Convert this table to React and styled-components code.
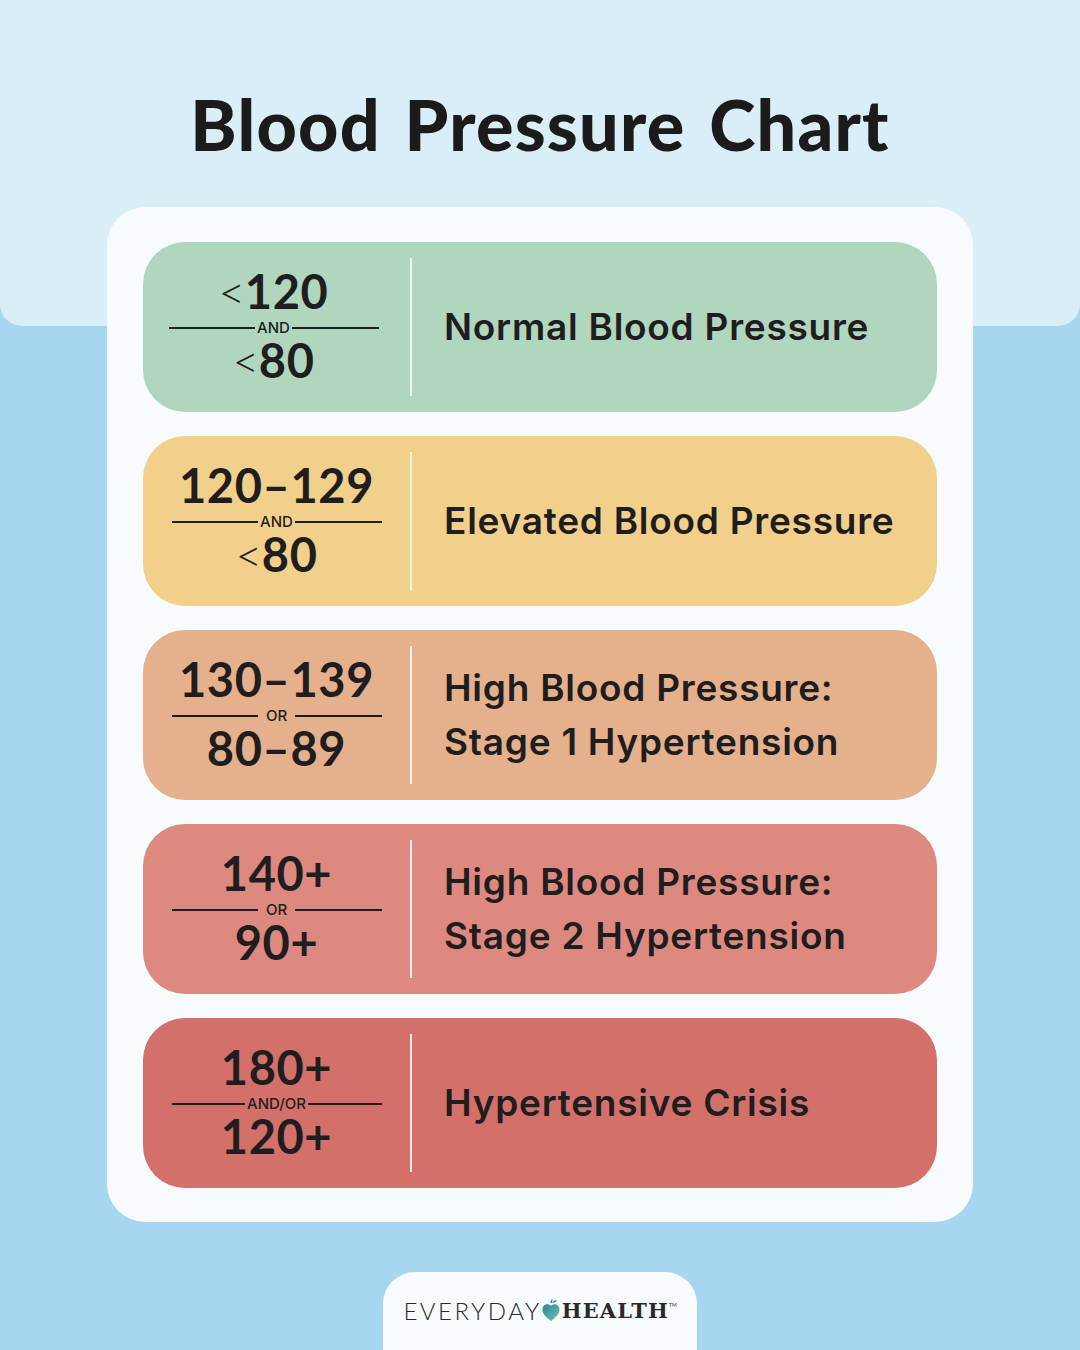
import React from "react";
import styled, { createGlobalStyle } from "styled-components";

const Global = createGlobalStyle`
  html, body { margin: 0; padding: 0; }
  body { background: #a7d7f0; font-family: "Lato", "Inter", sans-serif; }
`;

const Page = styled.div`
  position: relative;
  width: 1080px;
  height: 1350px;
  overflow: hidden;
  background: #a7d7f0;
  display: flex;
  flex-direction: column;
  align-items: center;
  &::before {
    content: "";
    position: absolute;
    left: 0;
    top: 0;
    width: 1080px;
    height: 326px;
    background: #daeef8;
    border-radius: 0 0 22px 22px;
  }
`;

const Title = styled.h1`
  position: relative;
  margin: 80px 0 0;
  height: 92px;
  font-family: "Lato", sans-serif;
  font-weight: 900;
  font-size: 70px;
  line-height: 88px;
  letter-spacing: 1.2px;
  word-spacing: 6px;
  color: #1b1b1b;
`;

const Card = styled.div`
  position: relative;
  margin-top: 35px;
  width: 866px;
  box-sizing: border-box;
  padding: 35px 36px 34px;
  background: #f7fbfd;
  border-radius: 38px;
  display: flex;
  flex-direction: column;
  gap: 24px;
`;

const Row = styled.div`
  height: 170px;
  border-radius: 42px;
  background: ${(p) => p.$bg};
  display: grid;
  grid-template-columns: 267px 2px 1fr;
`;

const Values = styled.div`
  display: flex;
  flex-direction: column;
  align-items: center;
  justify-content: center;
  padding-bottom: 4px;
`;

const Num = styled.div`
  font-family: "Lato", sans-serif;
  font-weight: 700;
  font-size: 47px;
  line-height: 52px;
  height: 52px;
  color: #1f1d1d;
  letter-spacing: 0.6px;
  display: flex;
  align-items: center;
  transform: translateX(${(p) => p.$shift || 0}px);
`;

const Lt = styled.span`
  font-weight: 300;
  font-size: 46px;
  margin-right: -1px;
  position: relative;
  top: 1px;
`;

const Sep = styled.div`
  width: 210px;
  height: 17px;
  box-sizing: border-box;
  padding-top: 5px;
  display: flex;
  align-items: center;
  gap: ${(p) => p.$gap}px;
  transform: translateX(${(p) => p.$shift || 0}px);
  &::before, &::after {
    content: "";
    flex: 1;
    height: 2px;
    background: #1f1d1d;
  }
`;

const SepLabel = styled.span`
  font-family: "Inter", sans-serif;
  font-weight: 500;
  font-size: 15px;
  line-height: 12px;
  color: #1f1d1d;
`;

const Divider = styled.div`
  background: #fbf7f2;
  margin: 16px 0;
  opacity: 0.9;
`;

const Label = styled.div`
  display: flex;
  flex-direction: column;
  justify-content: center;
  padding-left: 32px;
  font-family: "Inter", sans-serif;
  font-weight: 600;
  font-size: 37px;
  line-height: 54px;
  letter-spacing: 0.75px;
  color: #1f1d1d;
`;

const Tab = styled.div`
  position: relative;
  margin-top: 50px;
  width: 314px;
  height: 78px;
  flex-shrink: 0;
  background: #f7fbfd;
  border-radius: 32px 32px 0 0;
  display: flex;
  align-items: flex-start;
  justify-content: center;
  padding-top: 26px;
  box-sizing: border-box;
`;

const Logo = styled.div`
  display: flex;
  align-items: center;
  color: #2a2a2a;
`;

const Every = styled.span`
  font-family: "Lato", sans-serif;
  font-weight: 300;
  font-size: 24px;
  letter-spacing: 2.5px;
  line-height: 26px;
`;

const Health = styled.span`
  font-family: "DejaVu Serif", serif;
  font-weight: 700;
  font-size: 21px;
  letter-spacing: 1.1px;
  line-height: 26px;
`;

const Tm = styled.span`
  font-family: "Lato", sans-serif;
  font-size: 5px;
  align-self: flex-start;
  margin-top: 4px;
`;

const Heart = () => (
  <svg width="20" height="24" viewBox="0 0 20 24" style={{ margin: "0 1px 0 -1px" }}>
    <defs>
      <linearGradient id="hg" x1="0" y1="0" x2="1" y2="1">
        <stop offset="0" stopColor="#2f7f9a" />
        <stop offset="1" stopColor="#66c9ae" />
      </linearGradient>
    </defs>
    <path d="M10 4 C10 2.5 10.6 1.4 11.4 0.6" stroke="#2d6f86" strokeWidth="1.3" fill="none" />
    <path d="M11 3.4 C12.2 1.2 14.6 0.9 16 1.6 C14.8 3.6 12.6 4.2 11 3.4 Z" fill="#3e9ea0" />
    <path d="M10 22 C5 18 1.5 15 1.5 10.5 C1.5 7.3 3.8 5.2 6.4 5.2 C8 5.2 9.2 6 10 7 C10.8 6 12 5.2 13.6 5.2 C16.2 5.2 18.5 7.3 18.5 10.5 C18.5 15 15 18 10 22 Z" fill="url(#hg)" />
  </svg>
);

const rows = [
  { bg: "#b0d6be", top: "120", topLt: true, bottom: "80", botLt: true, sep: "AND", gap: 2, label: ["Normal Blood Pressure"], shift: -3 },
  { bg: "#f1d08b", top: "120–129", bottom: "80", botLt: true, sep: "AND", gap: 2, label: ["Elevated Blood Pressure"] },
  { bg: "#e4b18c", top: "130–139", bottom: "80–89", sep: "OR", gap: 8, label: ["High Blood Pressure:", "Stage 1 Hypertension"] },
  { bg: "#dd8980", top: "140+", bottom: "90+", sep: "OR", gap: 8, label: ["High Blood Pressure:", "Stage 2 Hypertension"] },
  { bg: "#d4706a", top: "180+", bottom: "120+", sep: "AND/OR", gap: 2, label: ["Hypertensive Crisis"] },
];

export default function App() {
  return (
    <>
      <Global />
      <Page>
        <Title>Blood Pressure Chart</Title>
        <Card>
          {rows.map((r, i) => (
            <Row key={i} $bg={r.bg}>
              <Values>
                <Num $shift={r.shift}>
                  {r.topLt && <Lt>&lt;</Lt>}
                  {r.top}
                </Num>
                <Sep $gap={r.gap} $shift={r.shift}>
                  <SepLabel>{r.sep}</SepLabel>
                </Sep>
                <Num $shift={r.shift}>
                  {r.botLt && <Lt>&lt;</Lt>}
                  {r.bottom}
                </Num>
              </Values>
              <Divider />
              <Label>
                {r.label.map((l, j) => (
                  <div key={j}>{l}</div>
                ))}
              </Label>
            </Row>
          ))}
        </Card>
        <Tab>
          <Logo>
            <Every>EVERYDAY</Every>
            <Heart />
            <Health>HEALTH</Health>
            <Tm>TM</Tm>
          </Logo>
        </Tab>
      </Page>
    </>
  );
}
